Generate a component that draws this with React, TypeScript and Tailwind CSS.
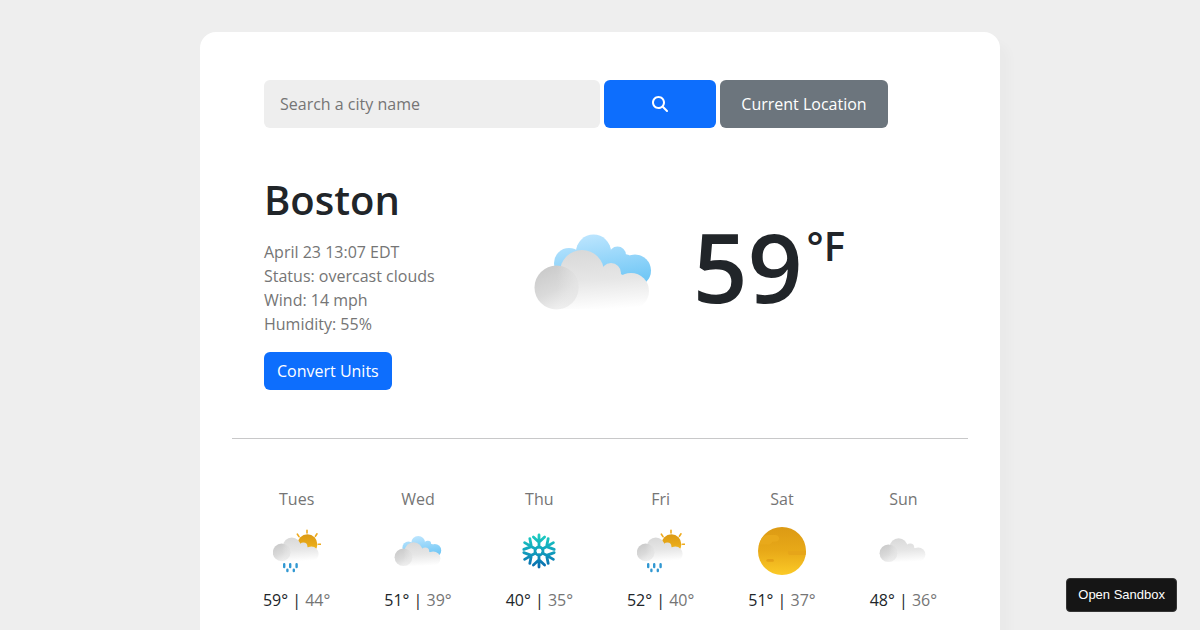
import { FormEvent, useState } from "react";
import { FaMagnifyingGlass } from "react-icons/fa6";

type Condition = "rain" | "overcast" | "snow" | "clear" | "clouds";

const details = ["April 23 13:07 EDT", "Status: overcast clouds", "Wind: 14 mph", "Humidity: 55%"];

const forecast: { day: string; condition: Condition; high: number; low: number }[] = [
  { day: "Tues", condition: "rain", high: 59, low: 44 },
  { day: "Wed", condition: "overcast", high: 51, low: 39 },
  { day: "Thu", condition: "snow", high: 40, low: 35 },
  { day: "Fri", condition: "rain", high: 52, low: 40 },
  { day: "Sat", condition: "clear", high: 51, low: 37 },
  { day: "Sun", condition: "clouds", high: 48, low: 36 },
];

function IconGradients() {
  return (
    <svg width="0" height="0" className="absolute" aria-hidden="true">
      <defs>
        <linearGradient id="cloud" gradientUnits="userSpaceOnUse" x1="60" y1="38" x2="64" y2="98">
          <stop offset="0" stopColor="#d9d9d9" />
          <stop offset="0.5" stopColor="#e6e6e6" />
          <stop offset="1" stopColor="#ffffff" />
        </linearGradient>
        <linearGradient id="puff" gradientUnits="userSpaceOnUse" x1="14" y1="56" x2="34" y2="98">
          <stop offset="0" stopColor="#cbcbcb" />
          <stop offset="0.5" stopColor="#dadada" />
          <stop offset="1" stopColor="#f5f5f5" />
        </linearGradient>
        <linearGradient id="puff-edge" gradientUnits="userSpaceOnUse" x1="2" y1="0" x2="46" y2="0">
          <stop offset="0.5" stopColor="#e6e6e6" stopOpacity="0" />
          <stop offset="1" stopColor="#e6e6e6" stopOpacity="0.8" />
        </linearGradient>
        <linearGradient id="sky" gradientUnits="userSpaceOnUse" x1="60" y1="22" x2="68" y2="72">
          <stop offset="0" stopColor="#bce5fe" />
          <stop offset="1" stopColor="#73c8f6" />
        </linearGradient>
        <linearGradient id="sun" x1="0" y1="0" x2="0" y2="1">
          <stop offset="0" stopColor="#dc9a14" />
          <stop offset="0.5" stopColor="#e8a918" />
          <stop offset="1" stopColor="#fbca27" />
        </linearGradient>
        <linearGradient id="ice" gradientUnits="userSpaceOnUse" x1="60" y1="17" x2="60" y2="103">
          <stop offset="0" stopColor="#1dd0c0" />
          <stop offset="0.5" stopColor="#12a1bd" />
          <stop offset="1" stopColor="#0868ae" />
        </linearGradient>
      </defs>
    </svg>
  );
}

function Cloud() {
  return (
    <>
      <g fill="url(#cloud)">
        <circle cx="49" cy="60" r="22" />
        <circle cx="78" cy="61" r="10" />
        <circle cx="98" cy="79" r="18" />
        <path d="M24 97V62L49 50L78 58L90 63L98 70V97Z" />
      </g>
      <circle cx="23.5" cy="75.5" r="22" fill="url(#puff)" />
      <circle cx="23.5" cy="75.5" r="22" fill="url(#puff-edge)" />
    </>
  );
}

function WeatherIcon({ condition, className }: { condition: Condition; className: string }) {
  return (
    <svg viewBox="0 0 120 120" className={className} role="img" aria-label={condition}>
      {condition === "overcast" && (
        <>
          <g fill="url(#sky)">
            <circle cx="36" cy="51" r="15" />
            <circle cx="60.5" cy="40" r="17.5" />
            <circle cx="84.5" cy="43" r="8.5" />
            <circle cx="102" cy="58.5" r="16" />
            <path d="M36 60V40H84L96 43L102 50L114 69L60 70Z" />
          </g>
          <Cloud />
        </>
      )}
      {condition === "clouds" && (
        <g transform="translate(0 -10)">
          <Cloud />
        </g>
      )}
      {condition === "rain" && (
        <>
          <circle cx="86" cy="43" r="25" fill="url(#sun)" />
          <path
            d="M85 8v7M61 18l4 6M110 17l-4 6M114 43h6"
            stroke="#efaa1c"
            strokeWidth="4"
            strokeLinecap="round"
          />
          <g transform="translate(-2 -12)">
            <Cloud />
          </g>
          <path
            d="M28 93v7M43 93v7M59 93v7M36 107v3M52 107v3"
            stroke="#3198d2"
            strokeWidth="6"
            strokeLinecap="round"
          />
        </>
      )}
      {condition === "snow" && (
        <g fill="none" stroke="url(#ice)" strokeWidth="7" strokeLinecap="round" strokeLinejoin="round">
          <circle cx="60" cy="60" r="10" />
          <path d="M60 50V20M46 25L60 38L74 25M68.7 55L96 39M83 29L79 49L98 56M68.7 65L96 81M98 64L79 71L83 91M60 70V100M74 95L60 82L46 95M51.3 65L24 81M37 91L41 71L22 64M51.3 55L24 39M22 56L41 49L37 29" />
        </g>
      )}
      {condition === "clear" && (
        <>
          <circle cx="60" cy="60" r="60" fill="url(#sun)" />
          <path d="M8 30Q16 19 27 20H42Q53 21 53 29Q52 37 42 37H36Q32 45 22 44H3Z" fill="#e8a91b" />
          <path d="M75 60H120Q120 65 119 70H83Q75 70 75 65Z" fill="#e6a519" />
          <path d="M24 80H37Q42 83 38 87H24Q17 84 24 80Z" fill="#e3a016" />
        </>
      )}
    </svg>
  );
}

export default function App() {
  const [city, setCity] = useState("");

  const handleSubmit = (event: FormEvent) => {
    event.preventDefault();
  };

  return (
    <div className="min-h-screen bg-[#eeeeee] py-8 font-['Open_Sans',sans-serif] text-base text-[#212529]">
      <IconGradients />
      <main className="mx-auto max-w-[800px] rounded-2xl bg-white px-8 py-12 shadow-[10px_10px_10px_rgba(0,0,0,0.02)]">
        <form onSubmit={handleSubmit} className="flex gap-1 px-8">
          <input
            type="search"
            aria-label="City name"
            placeholder="Search a city name"
            value={city}
            onChange={(e) => setCity(e.target.value)}
            className="h-12 w-1/2 rounded-md bg-[#eeeeee] px-4 placeholder:text-[#757575]"
          />
          <button
            type="submit"
            aria-label="Search"
            className="flex h-12 w-1/6 items-center justify-center rounded-md bg-[#0d6efd] text-white"
          >
            <FaMagnifyingGlass />
          </button>
          <button type="button" className="h-12 w-1/4 rounded-md bg-[#6c757d] text-white">
            Current Location
          </button>
        </form>

        <section className="mt-12 flex px-8">
          <div className="w-2/5">
            <h1 className="mb-4 text-[40px] leading-12 font-semibold">Boston</h1>
            <ul className="mb-4 text-[#757575]">
              {details.map((line) => (
                <li key={line}>{line}</li>
              ))}
            </ul>
            <button type="button" className="h-[38px] rounded-md bg-[#0d6efd] px-[13px] text-white">
              Convert Units
            </button>
          </div>
          <div className="flex items-start gap-10 pt-9">
            <WeatherIcon condition="overcast" className="size-[120px]" />
            <p className="flex items-start gap-1 pt-1.5 font-semibold">
              <span className="text-[96px] leading-24">59</span>
              <span className="pt-1 text-[40px] leading-12">°F</span>
            </p>
          </div>
        </section>

        <hr className="my-12 border-[#c8c8c9]" />

        <section className="grid grid-cols-6 px-1 text-center">
          {forecast.map(({ day, condition, high, low }) => (
            <div key={day} className="flex flex-col items-center">
              <h2 className="mb-4 text-[#757575]">{day}</h2>
              <WeatherIcon condition={condition} className="size-12" />
              <p className="mt-[13px]">
                {high}° | <span className="text-[#757575]">{low}°</span>
              </p>
            </div>
          ))}
        </section>
      </main>

      <a
        href="#sandbox"
        className="fixed right-[23px] bottom-[18px] flex h-[34px] items-center rounded border border-[#343434] bg-[#151515] px-[11px] font-['Liberation_Sans',sans-serif] text-[13px] text-white"
      >
        Open Sandbox
      </a>
    </div>
  );
}
